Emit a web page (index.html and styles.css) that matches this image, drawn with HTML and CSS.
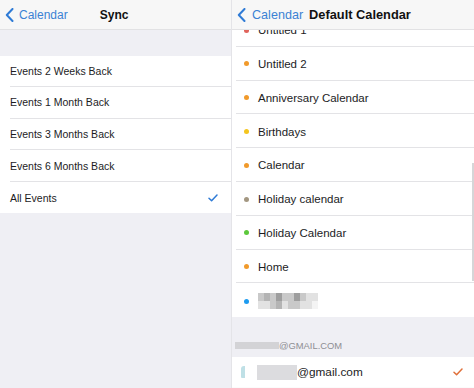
FILE: index.html
```html
<!DOCTYPE html>
<html lang="en">
<head>
  <meta charset="UTF-8">
  <title>Calendar Sync</title>
  <link rel="stylesheet" href="styles.css">
</head>
<body>
  <div class="screens">
    <!-- SYNC SCREEN -->
    <section class="pane sync">
      <header class="nav">
        <a class="back">
          <svg width="9" height="14" viewBox="0 0 9 14"><path d="M7.5 1 L1.8 7 L7.5 13" fill="none" stroke="#2f7bd6" stroke-width="2" stroke-linecap="round" stroke-linejoin="round"/></svg>
          <span>Calendar</span>
        </a>
        <h1>Sync</h1>
      </header>
      <div class="gap-band"></div>
      <ul class="list">
        <li>Events 2 Weeks Back</li>
        <li>Events 1 Month Back</li>
        <li>Events 3 Months Back</li>
        <li>Events 6 Months Back</li>
        <li class="chosen">All Events
          <svg class="tick" width="10" height="8" viewBox="0 0 10 8"><path d="M1 4.3 L3.6 6.8 L9 1" fill="none" stroke="#2f7bd6" stroke-width="1.5" stroke-linecap="round" stroke-linejoin="round"/></svg>
        </li>
      </ul>
    </section>

    <!-- DEFAULT CALENDAR SCREEN -->
    <section class="pane calendars">
      <header class="nav">
        <a class="back">
          <svg width="9" height="14" viewBox="0 0 9 14"><path d="M7.5 1 L1.8 7 L7.5 13" fill="none" stroke="#2f7bd6" stroke-width="2" stroke-linecap="round" stroke-linejoin="round"/></svg>
          <span>Calendar</span>
        </a>
        <h1>Default Calendar</h1>
      </header>
      <div class="scroll">
        <ul class="list cal-list">
          <li class="first"><i class="dot red"></i>Untitled 1</li>
          <li><i class="dot orange"></i>Untitled 2</li>
          <li><i class="dot orange"></i>Anniversary Calendar</li>
          <li><i class="dot yellow"></i>Birthdays</li>
          <li><i class="dot orange"></i>Calendar</li>
          <li><i class="dot taupe"></i>Holiday calendar</li>
          <li><i class="dot green"></i>Holiday Calendar</li>
          <li><i class="dot orange"></i>Home</li>
          <li><i class="dot blue"></i>
            <span class="mosaic">
              <b class="m2"></b><b class="m3"></b><b class="m2"></b><b class="m4"></b><b class="m2"></b><b class="m2"></b><b class="m4"></b><b class="m2"></b><b class="m1"></b><b class="m1"></b>
              <b class="m1"></b><b class="m1"></b><b class="m2"></b><b class="m3"></b><b class="m1"></b><b class="m2"></b><b class="m2"></b><b class="m1"></b><b class="m1"></b><b class="m0"></b>
            </span>
          </li>
        </ul>
        <div class="group-label"><span class="smudge wide"></span>@GMAIL.COM</div>
        <ul class="list cal-list">
          <li class="account">
            <i class="acct-icon"></i><span class="smudge name"></span>@gmail.com
            <svg class="tick" width="10" height="8" viewBox="0 0 10 8"><path d="M1 4.3 L3.6 6.8 L9 1" fill="none" stroke="#e0703a" stroke-width="1.5" stroke-linecap="round" stroke-linejoin="round"/></svg>
          </li>
        </ul>
        <div class="scrollbar"></div>
      </div>
    </section>
  </div>
</body>
</html>
```

FILE: styles.css
```css
body {
  margin: 0;
  padding: 0;
  background: #efeff4;
  font-family: 'Liberation Sans', Arial, sans-serif;
  color: #1c1c1e;
}
.screens {
  display: flex;
  width: 474px;
  height: 388px;
  overflow: hidden;
}
.pane {
  display: flex;
  flex-direction: column;
  background: #efeff4;
}
.sync {
  width: 231px;
  border-right: 1px solid #e4e4e8;
}
.calendars {
  flex: 1;
  background: #fbfbfb;
}
.nav {
  height: 30px;
  flex: none;
  display: flex;
  align-items: center;
  background: #f7f7f7;
  border-bottom: 1px solid #e2e2e4;
  box-sizing: border-box;
  position: relative;
  z-index: 2;
}
.nav h1 {
  margin: 0;
  font-size: 12px;
  font-weight: bold;
  color: #111;
}
.back {
  display: flex;
  align-items: center;
  gap: 5px;
  color: #3b82d4;
  font-size: 12px;
}
.sync .nav { padding-left: 5px; }
.sync .back { margin-right: 32px; }
.calendars .nav { padding-left: 5px; }
.calendars .back { font-size: 12.6px; margin-right: 6px; gap: 6px; }
.calendars .nav h1 { font-size: 12.8px; }

.gap-band { height: 25.5px; }

.list {
  list-style: none;
  margin: 0;
  padding: 0;
  background: #fff;
}
.sync .list li {
  height: 31.6px;
  display: flex;
  align-items: center;
  margin-left: 10px;
  font-size: 10.5px;
  border-bottom: 1px solid #e3e3e6;
  box-sizing: border-box;
}
.sync .list li:last-child { border-bottom: none; }
.sync .tick { margin-left: auto; margin-right: 13px; }

.scroll {
  flex: 1;
  overflow: hidden;
  position: relative;
}
.cal-list { padding-left: 4px; }
.cal-list li {
  height: 33.8px;
  display: flex;
  align-items: center;
  font-size: 11.5px;
  border-bottom: 1px solid #e3e3e6;
  box-sizing: border-box;
  padding-left: 8px;
  padding-top: 1.5px;
}
.cal-list li:last-child { border-bottom: none; }
.cal-list li.first { margin-top: -17px; }
.dot {
  width: 5px;
  height: 5px;
  border-radius: 50%;
  margin-right: 9px;
  flex: none;
}
.red { background: #e0635b; }
.orange { background: #f19a2b; }
.yellow { background: #f4c51e; }
.taupe { background: #a39781; }
.green { background: #5cc83b; }
.blue { background: #1d9bf0; }

.mosaic {
  display: grid;
  grid-template-columns: repeat(10, 6px);
  grid-auto-rows: 8px;
}
.mosaic b { display: block; }
.m0 { background: #f4f4f4; }
.m1 { background: #e2e2e2; }
.m2 { background: #c9c9c9; }
.m3 { background: #b4b4b4; }
.m4 { background: #9e9e9e; }

.group-label {
  height: 40px;
  display: flex;
  align-items: flex-end;
  padding: 0 0 6px 3px;
  box-sizing: border-box;
  font-size: 9.4px;
  color: #8e8e93;
  background: #efeff4;
}
.smudge { display: inline-block; background: #d3d3d6; }
.smudge.wide { width: 44px; height: 7px; margin-bottom: 2px; }
.cal-list li.account {
  font-size: 11.8px;
  padding-left: 5px;
  padding-top: 0;
  height: 30px;
}
.acct-icon {
  width: 4px;
  height: 12px;
  background: #bfe0e6;
  border-radius: 3px 0 0 1px;
  margin-right: 12px;
}
.smudge.name { width: 40px; height: 15px; background: #dcdcdf; }
.account .tick { margin-left: auto; margin-right: 11px; }

.scrollbar {
  position: absolute;
  right: 0;
  top: 133px;
  width: 2px;
  height: 118px;
  background: #d6d6d8;
}
```
